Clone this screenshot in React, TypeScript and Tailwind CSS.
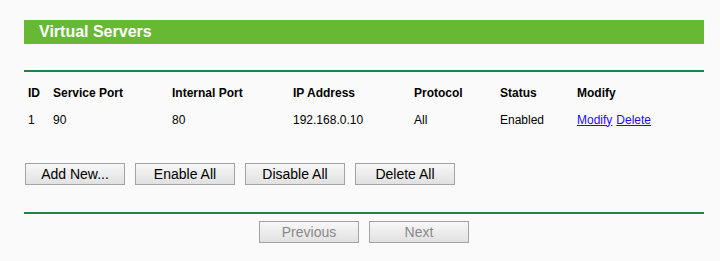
import React from "react";

const btn =
  "w-[100px] h-[22px] border border-[#a3a3a3] bg-gradient-to-b from-[#f7f7f7] to-[#e1e1e1] text-[14px] leading-[20px] text-center";

export default function App() {
  return (
    <div className="w-[720px] h-[261px] bg-[#fafafa] font-['Liberation_Sans',Arial,sans-serif] text-black">
      <div className="ml-[24px] w-[680px] pt-[20px] flex flex-col">
        <div className="h-[24px] bg-[#67b934] pl-[15px] flex items-center">
          <span className="text-white font-bold text-[16px] leading-none">Virtual Servers</span>
        </div>
        <div className="mt-[26px] h-[2px] bg-[#1e8443]" />
        <div className="pl-[4px] mt-[7px] grid grid-cols-[25px_119px_121px_121px_86px_77px_1fr] text-[12px]">
          <div className="h-[27px] flex items-center font-bold">ID</div>
          <div className="h-[27px] flex items-center font-bold">Service Port</div>
          <div className="h-[27px] flex items-center font-bold">Internal Port</div>
          <div className="h-[27px] flex items-center font-bold">IP Address</div>
          <div className="h-[27px] flex items-center font-bold">Protocol</div>
          <div className="h-[27px] flex items-center font-bold">Status</div>
          <div className="h-[27px] flex items-center font-bold">Modify</div>
          <div className="h-[27px] flex items-center">1</div>
          <div className="h-[27px] flex items-center">90</div>
          <div className="h-[27px] flex items-center">80</div>
          <div className="h-[27px] flex items-center">192.168.0.10</div>
          <div className="h-[27px] flex items-center">All</div>
          <div className="h-[27px] flex items-center">Enabled</div>
          <div className="h-[27px] flex items-center gap-[4px]">
            <a href="#" className="text-[#1a0dff] underline">Modify</a>
            <a href="#" className="text-[#1a0dff] underline">Delete</a>
          </div>
        </div>
        <div className="mt-[30px] ml-[1px] flex gap-[10px]">
          <button className={btn}>Add New...</button>
          <button className={btn}>Enable All</button>
          <button className={btn}>Disable All</button>
          <button className={btn}>Delete All</button>
        </div>
        <div className="mt-[27px] h-[2px] bg-[#1e8443]" />
        <div className="mt-[7px] flex justify-center gap-[10px]">
          <button className={btn + " text-[#888888]"} disabled>Previous</button>
          <button className={btn + " text-[#888888]"} disabled>Next</button>
        </div>
      </div>
    </div>
  );
}
